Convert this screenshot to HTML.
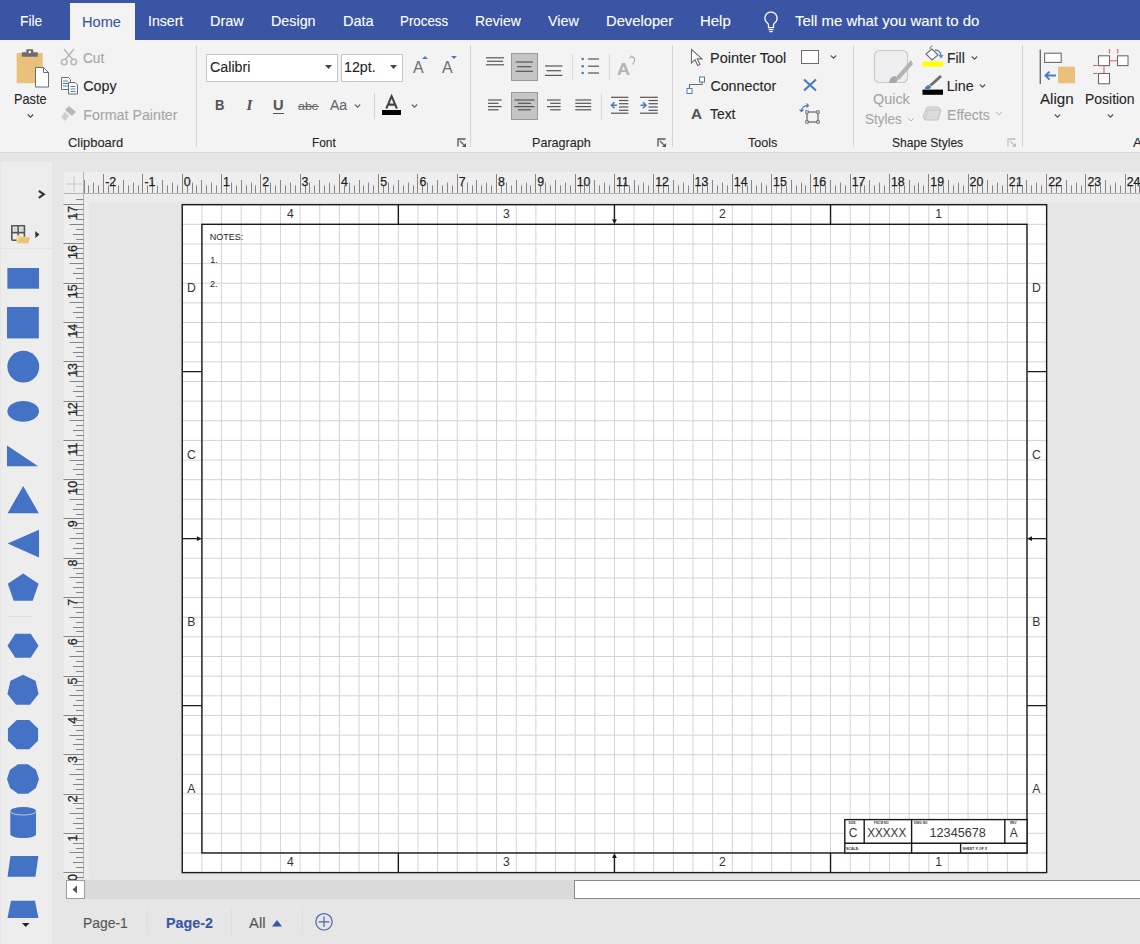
<!DOCTYPE html><html><head><meta charset="utf-8"><style>
*{margin:0;padding:0;box-sizing:border-box}
html,body{width:1140px;height:944px;overflow:hidden}
body{background:#e6e6e6;font-family:"Liberation Sans",sans-serif;position:relative;color:#262626}
.abs{position:absolute}
.tab{position:absolute;top:0;height:40px;line-height:42px;color:#fff;font-size:15px;white-space:nowrap}
.rib{position:absolute;left:0;top:40px;width:1140px;height:113px;background:#f3f3f3;border-bottom:1px solid #d6d6d6}
.t{position:absolute;white-space:nowrap;font-size:15px;color:#262626;line-height:1;-webkit-text-stroke:0.1px currentColor}
.g{color:#a6a6a6}
.sep{position:absolute;width:1px;background:#c8c8c8}
.glab{position:absolute;top:135px;font-size:14px;color:#262626;white-space:nowrap;line-height:1}
</style></head><body><div class="abs" style="left:0;top:0;width:1140px;height:40px;background:#3955a3"></div><div class="abs" style="left:70px;top:3px;width:65px;height:38px;background:#f3f3f3"></div><div class="t" style="left:20px;top:14.35px;font-size:14.94px;color:#ffffff;transform:scaleX(0.918);transform-origin:0 0;">File</div><div class="t" style="left:148.4px;top:14.35px;font-size:14.94px;color:#ffffff;transform:scaleX(0.944);transform-origin:0 0;">Insert</div><div class="t" style="left:210.4px;top:14.35px;font-size:14.94px;color:#ffffff;transform:scaleX(0.969);transform-origin:0 0;">Draw</div><div class="t" style="left:271.2px;top:14.35px;font-size:14.94px;color:#ffffff;transform:scaleX(0.959);transform-origin:0 0;">Design</div><div class="t" style="left:342.8px;top:14.35px;font-size:14.94px;color:#ffffff;transform:scaleX(0.973);transform-origin:0 0;">Data</div><div class="t" style="left:400.2px;top:14.35px;font-size:14.94px;color:#ffffff;transform:scaleX(0.893);transform-origin:0 0;">Process</div><div class="t" style="left:475.3px;top:14.35px;font-size:14.94px;color:#ffffff;transform:scaleX(0.933);transform-origin:0 0;">Review</div><div class="t" style="left:548.2px;top:14.35px;font-size:14.94px;color:#ffffff;transform:scaleX(0.959);transform-origin:0 0;">View</div><div class="t" style="left:606px;top:14.35px;font-size:14.94px;color:#ffffff;transform:scaleX(0.987);transform-origin:0 0;">Developer</div><div class="t" style="left:700px;top:14.35px;font-size:14.94px;color:#ffffff;">Help</div><div class="t" style="left:795px;top:14.35px;font-size:14.94px;color:#ffffff;">Tell me what you want to do</div><div class="t" style="left:82.1px;top:14.77px;font-size:14.8px;color:#3a56a0;transform:scaleX(0.985);transform-origin:0 0;">Home</div><svg class="abs" style="left:762px;top:11px;" width="18" height="22" viewBox="0 0 18 22"><path d="M9 1.2a6 6 0 0 0-3.6 10.8c.7.6 1.1 1.4 1.1 2.3v2.4h5v-2.4c0-.9.4-1.7 1.1-2.3A6 6 0 0 0 9 1.2z" fill="none" stroke="#fff" stroke-width="1.3"/><path d="M6.6 18.6h4.8M7.4 20.6h3.2" stroke="#fff" stroke-width="1.3"/></svg><div class="rib"></div><div class="sep" style="left:195.6px;top:45px;height:102px;background:#d4d4d4"></div><div class="sep" style="left:470px;top:45px;height:102px;background:#d4d4d4"></div><div class="sep" style="left:672px;top:45px;height:102px;background:#d4d4d4"></div><div class="sep" style="left:852.5px;top:45px;height:102px;background:#d4d4d4"></div><div class="sep" style="left:1021.8px;top:45px;height:102px;background:#d4d4d4"></div><div class="t" style="left:67.5px;top:136.5px;font-size:12.29px;color:#262626;transform:scaleX(1.051);transform-origin:0 0;">Clipboard</div><div class="t" style="left:311.7px;top:136.5px;font-size:12.29px;color:#262626;transform:scaleX(0.968);transform-origin:0 0;">Font</div><div class="t" style="left:531.7px;top:136.5px;font-size:12.29px;color:#262626;transform:scaleX(1.026);transform-origin:0 0;">Paragraph</div><div class="t" style="left:748px;top:136.5px;font-size:12.29px;color:#262626;transform:scaleX(1.025);transform-origin:0 0;">Tools</div><div class="t" style="left:892px;top:136.5px;font-size:12.29px;color:#262626;transform:scaleX(0.983);transform-origin:0 0;">Shape Styles</div><div class="t" style="left:1133px;top:136.5px;font-size:12.29px;color:#262626;transform:scaleX(1.098);transform-origin:0 0;">A</div><svg class="abs" style="left:456.6px;top:137.5px;" width="10" height="10" viewBox="0 0 10 10"><path d="M1 8.5V1h7.5" fill="none" stroke="#555" stroke-width="1.3"/><path d="M3 3l4.2 4.2" stroke="#555" stroke-width="1.2"/><path d="M9 9H5L9 5z" fill="#555"/></svg><svg class="abs" style="left:657.4px;top:137.5px;" width="10" height="10" viewBox="0 0 10 10"><path d="M1 8.5V1h7.5" fill="none" stroke="#555" stroke-width="1.3"/><path d="M3 3l4.2 4.2" stroke="#555" stroke-width="1.2"/><path d="M9 9H5L9 5z" fill="#555"/></svg><svg class="abs" style="left:1006.6px;top:137.5px;" width="10" height="10" viewBox="0 0 10 10"><path d="M1 8.5V1h7.5" fill="none" stroke="#c0c0c0" stroke-width="1.3"/><path d="M3 3l4.2 4.2" stroke="#c0c0c0" stroke-width="1.2"/><path d="M9 9H5L9 5z" fill="#c0c0c0"/></svg><svg class="abs" style="left:14px;top:47px;" width="38" height="42" viewBox="0 0 38 42"><rect x="2.7" y="6" width="26" height="30.2" fill="#eac17a"/><path d="M7.8 9.7V5.2h4.5V3.3c0-.6.5-1 1-1h5c.5 0 1 .4 1 1v1.9h4.5v4.5z" fill="#6d6d6d"/><circle cx="15.8" cy="5" r="1.3" fill="#f3f3f3"/><path d="M21.5 20.5h8l5 5v14.5h-13z" fill="#fff" stroke="#6d6d6d" stroke-width="1"/><path d="M29.5 20.5v5h5" fill="none" stroke="#6d6d6d" stroke-width="1"/></svg><div class="t" style="left:14px;top:92.14px;font-size:14.25px;color:#262626;transform:scaleX(0.892);transform-origin:0 0;">Paste</div><svg class="abs" style="left:26px;top:113px;" width="9" height="6" viewBox="0 0 9 6"><path d="M1.8 1.5l2.7 2.7L7.2 1.5" fill="none" stroke="#444" stroke-width="1.2"/></svg><svg class="abs" style="left:60px;top:48px;" width="18" height="18" viewBox="0 0 18 18"><path d="M4 1l9 11M14 1l-9 11" stroke="#b8b8b8" stroke-width="1.5" fill="none"/><circle cx="4.2" cy="14" r="2.8" fill="none" stroke="#b8b8b8" stroke-width="1.5"/><circle cx="13.8" cy="14" r="2.8" fill="none" stroke="#b8b8b8" stroke-width="1.5"/></svg><div class="t" style="left:83.3px;top:50.74px;font-size:14.25px;color:#a6a6a6;transform:scaleX(0.956);transform-origin:0 0;">Cut</div><svg class="abs" style="left:60px;top:76px;" width="19" height="19" viewBox="0 0 19 19"><path d="M1.5 1.5h7l2 2v10h-9z" fill="#fff" stroke="#6d6d6d"/><path d="M3 5h5M3 7.5h5M3 10h5" stroke="#4a7ebb" stroke-width="1"/><path d="M8.5 6.5h6.5l2.5 2.5v9h-9z" fill="#fff" stroke="#6d6d6d"/><path d="M10.5 10.5h5M10.5 13h5M10.5 15.5h5" stroke="#4a7ebb" stroke-width="1"/></svg><div class="t" style="left:83.3px;top:78.84px;font-size:14.25px;color:#262626;">Copy</div><svg class="abs" style="left:60px;top:105px;" width="18" height="17" viewBox="0 0 18 17"><path d="M9 1l7 6-4 4-7-6z" fill="#b8b8b8"/><path d="M5 7l4 4-4 5-4-4z" fill="#cfcfcf"/></svg><div class="t" style="left:83.3px;top:107.74px;font-size:14.25px;color:#a6a6a6;">Format Painter</div><div class="abs" style="left:206px;top:53.5px;width:131.5px;height:28px;background:#fff;border:1px solid #c6c6c6"></div><div class="abs" style="left:340.5px;top:53.5px;width:62px;height:28px;background:#fff;border:1px solid #c6c6c6"></div><div class="t" style="left:210px;top:60.44px;font-size:14.25px;color:#262626;">Calibri</div><div class="t" style="left:344px;top:60.44px;font-size:14.25px;color:#262626;">12pt.</div><svg class="abs" style="left:325px;top:65px;" width="8" height="5" viewBox="0 0 8 5"><path d="M0 0h7l-3.5 4z" fill="#444"/></svg><svg class="abs" style="left:389.5px;top:65px;" width="8" height="5" viewBox="0 0 8 5"><path d="M0 0h7l-3.5 4z" fill="#444"/></svg><svg class="abs" style="left:412px;top:55px;" width="17" height="20" viewBox="0 0 17 20"><text x="1" y="18" font-family="Liberation Sans" font-size="16" fill="#6d6d6d">A</text><path d="M10 4l3-3 3 3z" fill="#4a7ebb"/></svg><svg class="abs" style="left:441px;top:55px;" width="17" height="20" viewBox="0 0 17 20"><text x="1" y="18" font-family="Liberation Sans" font-size="16" fill="#6d6d6d">A</text><path d="M10 1l3 3 3-3z" fill="#4a7ebb"/></svg><div class="t" style="left:214.6px;top:98.39px;font-size:14.66px;color:#555;font-weight:bold;transform:scaleX(0.888);transform-origin:0 0;">B</div><div class="t" style="left:246.5px;top:98px;font-size:15px;color:#555;font-style:italic;font-family:'Liberation Serif',serif;font-weight:bold">I</div><div class="t" style="left:273px;top:98.39px;font-size:14.66px;color:#555;font-weight:bold;">U</div><div class="abs" style="left:272.5px;top:112.5px;width:11.5px;height:1.5px;background:#555"></div><div class="t" style="left:298px;top:101.93px;font-size:10.47px;color:#666;transform:scaleX(1.184);transform-origin:0 0;">abc</div><div class="abs" style="left:297.5px;top:106px;width:21px;height:1.2px;background:#666"></div><div class="t" style="left:329.6px;top:98.39px;font-size:14.66px;color:#666;transform:scaleX(0.959);transform-origin:0 0;">Aa</div><svg class="abs" style="left:353px;top:103px;" width="9" height="6" viewBox="0 0 9 6"><path d="M1.8 1.5l2.7 2.7L7.2 1.5" fill="none" stroke="#666" stroke-width="1.1"/></svg><div class="sep" style="left:374px;top:93px;height:26px;background:#d4d4d4"></div><svg class="abs" style="left:380px;top:94px;" width="22" height="16" viewBox="0 0 22 16"><path d="M6.3 14.7L11.6 2.2L16.9 14.7M8.2 10.6H15" fill="none" stroke="#444" stroke-width="2.1"/></svg><div class="abs" style="left:381.7px;top:110px;width:19.7px;height:5px;background:#000"></div><svg class="abs" style="left:410px;top:103px;" width="9" height="6" viewBox="0 0 9 6"><path d="M1.8 1.5l2.7 2.7L7.2 1.5" fill="none" stroke="#666" stroke-width="1.1"/></svg><div class="abs" style="left:511px;top:53.3px;width:27px;height:27.6px;background:#c5c5c5;border:1px solid #9a9a9a"></div><div class="abs" style="left:511px;top:91.6px;width:27px;height:28px;background:#c5c5c5;border:1px solid #9a9a9a"></div><svg class="abs" style="left:0px;top:0px;pointer-events:none" width="680" height="130" viewBox="0 0 680 130"><path d="M486 57.8H504" stroke="#555" stroke-width="1.2"/><path d="M487 61.3H503" stroke="#555" stroke-width="1.2"/><path d="M486 64.8H504" stroke="#555" stroke-width="1.2"/><path d="M515.7 62H533" stroke="#555" stroke-width="1.2"/><path d="M517 66.7H531.5" stroke="#555" stroke-width="1.2"/><path d="M515.7 71.3H533" stroke="#555" stroke-width="1.2"/><path d="M545 66H562.4" stroke="#555" stroke-width="1.2"/><path d="M546.5 70.7H561" stroke="#555" stroke-width="1.2"/><path d="M545 75.4H562.4" stroke="#555" stroke-width="1.2"/><path d="M488 100H501.7" stroke="#555" stroke-width="1.2"/><path d="M488 103.3H498.5" stroke="#555" stroke-width="1.2"/><path d="M488 106.6H501.7" stroke="#555" stroke-width="1.2"/><path d="M488 109.8H498.5" stroke="#555" stroke-width="1.2"/><path d="M514.5 100H534.5" stroke="#555" stroke-width="1.2"/><path d="M518 103.3H531" stroke="#555" stroke-width="1.2"/><path d="M514.5 106.6H534.5" stroke="#555" stroke-width="1.2"/><path d="M518 109.8H531" stroke="#555" stroke-width="1.2"/><path d="M547 100H560.6" stroke="#555" stroke-width="1.2"/><path d="M550.2 103.3H560.6" stroke="#555" stroke-width="1.2"/><path d="M547 106.6H560.6" stroke="#555" stroke-width="1.2"/><path d="M550.2 109.8H560.6" stroke="#555" stroke-width="1.2"/><path d="M575.3 100H591.2" stroke="#555" stroke-width="1.2"/><path d="M575.3 103.3H591.2" stroke="#555" stroke-width="1.2"/><path d="M575.3 106.6H591.2" stroke="#555" stroke-width="1.2"/><path d="M575.3 109.8H591.2" stroke="#555" stroke-width="1.2"/><path d="M587.9 59H599" stroke="#555" stroke-width="1.2"/><path d="M587.9 66.2H599" stroke="#555" stroke-width="1.2"/><path d="M587.9 73H599" stroke="#555" stroke-width="1.2"/><circle cx="582.7" cy="59" r="1.3" fill="#4a7ebb"/><circle cx="582.7" cy="66.2" r="1.3" fill="#4a7ebb"/><circle cx="582.7" cy="73" r="1.3" fill="#4a7ebb"/><path d="M611 97.3H628.4" stroke="#555" stroke-width="1.2"/><path d="M619 100.5H628.4" stroke="#555" stroke-width="1.2"/><path d="M619 103.7H628.4" stroke="#555" stroke-width="1.2"/><path d="M619 107H628.4" stroke="#555" stroke-width="1.2"/><path d="M619 110.3H628.4" stroke="#555" stroke-width="1.2"/><path d="M611 113.2H628.4" stroke="#555" stroke-width="1.2"/><path d="M617 105.3h-5.5M614.5 102.3l-3 3 3 3" stroke="#4a7ebb" stroke-width="1.6" fill="none"/><path d="M640 97.3H657.8" stroke="#555" stroke-width="1.2"/><path d="M648.5 100.5H657.8" stroke="#555" stroke-width="1.2"/><path d="M648.5 103.7H657.8" stroke="#555" stroke-width="1.2"/><path d="M648.5 107H657.8" stroke="#555" stroke-width="1.2"/><path d="M648.5 110.3H657.8" stroke="#555" stroke-width="1.2"/><path d="M640 113.2H657.8" stroke="#555" stroke-width="1.2"/><path d="M640.5 105.3h5.5M643 102.3l3 3-3 3" stroke="#4a7ebb" stroke-width="1.6" fill="none"/></svg><div class="sep" style="left:571.7px;top:54px;height:26px;background:#d9d9d9"></div><div class="sep" style="left:608.5px;top:54px;height:26px;background:#d9d9d9"></div><div class="sep" style="left:601.3px;top:92.5px;height:27px;background:#d9d9d9"></div><div class="t" style="left:616.5px;top:60.74px;font-size:17.32px;color:#b5b5b5;font-weight:bold;transform:scaleX(1.039);transform-origin:0 0;">A</div><svg class="abs" style="left:627px;top:55px;" width="10" height="12" viewBox="0 0 10 12"><path d="M2.5 3.5L4.5 1.2 6.5 3.3M4.6 1.5C8 2 9 6 5.5 9.5" fill="none" stroke="#b5b5b5" stroke-width="1.2"/></svg><svg class="abs" style="left:689px;top:48px;" width="15" height="19" viewBox="0 0 15 19"><path d="M2.5 1.5v13.5l3.5-3.3 2.7 5.8 2.3-1-2.7-5.6h4.7z" fill="#fff" stroke="#6d6d6d" stroke-width="1.1"/></svg><div class="t" style="left:710.4px;top:50.74px;font-size:14.25px;color:#262626;transform:scaleX(1.018);transform-origin:0 0;">Pointer Tool</div><svg class="abs" style="left:686px;top:76px;" width="20" height="19" viewBox="0 0 20 19"><rect x="13.5" y="1" width="5" height="5" fill="#fff" stroke="#4a7ebb"/><rect x="1" y="12.5" width="5" height="5" fill="#fff" stroke="#4a7ebb"/><path d="M3.5 12.5V8.5H16V6" fill="none" stroke="#6d6d6d" stroke-width="1.1"/></svg><div class="t" style="left:710.4px;top:78.84px;font-size:14.25px;color:#262626;">Connector</div><div class="t" style="left:691px;top:106.89px;font-size:14.66px;color:#555;font-weight:bold;transform:scaleX(1.039);transform-origin:0 0;">A</div><div class="t" style="left:710.4px;top:107.24px;font-size:14.25px;color:#262626;transform:scaleX(0.972);transform-origin:0 0;">Text</div><div class="abs" style="left:800.7px;top:50.2px;width:18.3px;height:13.5px;background:#fff;border:1px solid #6d6d6d"></div><svg class="abs" style="left:829px;top:54px;" width="9" height="6" viewBox="0 0 9 6"><path d="M1.8 1.5l2.7 2.7L7.2 1.5" fill="none" stroke="#555" stroke-width="1.1"/></svg><svg class="abs" style="left:802px;top:78px;" width="16" height="14" viewBox="0 0 16 14"><path d="M2 1.5l12 11M14 1.5l-12 11" stroke="#4a7ebb" stroke-width="2.2"/></svg><svg class="abs" style="left:799px;top:103px;" width="22" height="21" viewBox="0 0 22 21"><rect x="8" y="9" width="11" height="10" fill="none" stroke="#555" stroke-width="1.1"/><rect x="6.8" y="7.8" width="2.4" height="2.4" fill="#fff" stroke="#555" stroke-width=".8"/><rect x="17.8" y="7.8" width="2.4" height="2.4" fill="#fff" stroke="#555" stroke-width=".8"/><rect x="6.8" y="17.8" width="2.4" height="2.4" fill="#fff" stroke="#555" stroke-width=".8"/><rect x="17.8" y="17.8" width="2.4" height="2.4" fill="#fff" stroke="#555" stroke-width=".8"/><path d="M2.5 8.5c0-4 3-6 7-6" fill="none" stroke="#4a7ebb" stroke-width="1.3"/><path d="M7.5 0.5l2 2-2 2M0.5 6.5l2 2 2-2" fill="none" stroke="#4a7ebb" stroke-width="1.1"/></svg><svg class="abs" style="left:872px;top:48px;" width="42" height="36" viewBox="0 0 42 36"><rect x="2.5" y="2.5" width="33" height="32" rx="5" fill="#efeff2" stroke="#c9c9c9" stroke-width="1.2"/><path d="M39 12l-15 17 3 3 14-16z" fill="#b4b4b4"/><path d="M23 28c-3 0-6 3-6 7h4c3 0 5-2 5-4z" fill="#a8a8a8"/></svg><div class="t" style="left:873px;top:91.94px;font-size:14.25px;color:#a6a6a6;transform:scaleX(1.011);transform-origin:0 0;">Quick</div><div class="t" style="left:865.3px;top:111.94px;font-size:14.25px;color:#a6a6a6;transform:scaleX(0.946);transform-origin:0 0;">Styles</div><svg class="abs" style="left:907px;top:117px;" width="8" height="5" viewBox="0 0 8 5"><path d="M1 1l3 3 3-3" fill="none" stroke="#b5b5b5" stroke-width="1"/></svg><svg class="abs" style="left:921px;top:45px;" width="24" height="24" viewBox="0 0 24 24"><path d="M5 9l6-5 6 6-6 5z" fill="#fff" stroke="#6d6d6d" stroke-width="1.1"/><path d="M9 4c0-2 1-3 2.5-3" fill="none" stroke="#6d6d6d"/><path d="M14 5c3 0 6 2 6 6" fill="none" stroke="#4a7ebb" stroke-width="1.5"/><path d="M18 10l2 2.5 2-2.5" fill="none" stroke="#4a7ebb" stroke-width="1.2"/><rect x="1.5" y="16.5" width="20.5" height="5" fill="#ffff00"/></svg><div class="t" style="left:946.7px;top:50.84px;font-size:14.25px;color:#262626;transform:scaleX(0.978);transform-origin:0 0;">Fill</div><svg class="abs" style="left:970px;top:55px;" width="9" height="6" viewBox="0 0 9 6"><path d="M1.8 1.5l2.7 2.7L7.2 1.5" fill="none" stroke="#555" stroke-width="1.1"/></svg><svg class="abs" style="left:921px;top:74px;" width="24" height="22" viewBox="0 0 24 22"><path d="M19 1l2 2-10 9-3-1z" fill="#6d6d6d"/><path d="M8 11c-2 0-4 2-4.5 4h5l2-2z" fill="#4a7ebb"/><rect x="1.5" y="15.6" width="20.5" height="5.2" fill="#000"/></svg><div class="t" style="left:946.7px;top:78.84px;font-size:14.25px;color:#262626;">Line</div><svg class="abs" style="left:978px;top:83px;" width="9" height="6" viewBox="0 0 9 6"><path d="M1.8 1.5l2.7 2.7L7.2 1.5" fill="none" stroke="#555" stroke-width="1.1"/></svg><svg class="abs" style="left:922px;top:105px;" width="20" height="18" viewBox="0 0 20 18"><path d="M5 2h11l3 3-3 10H3L1 12z" fill="#dcdcdc" stroke="#c4c4c4" stroke-width="1"/><path d="M3 15l3-10h13" fill="none" stroke="#c4c4c4"/></svg><div class="t" style="left:947.2px;top:107.74px;font-size:14.25px;color:#a6a6a6;transform:scaleX(0.989);transform-origin:0 0;">Effects</div><svg class="abs" style="left:995px;top:111px;" width="8" height="5" viewBox="0 0 8 5"><path d="M1 1l3 3 3-3" fill="none" stroke="#b5b5b5" stroke-width="1"/></svg><svg class="abs" style="left:1037px;top:47px;" width="42" height="40" viewBox="0 0 42 40"><path d="M3.3 2.5v34.5" stroke="#6d6d6d" stroke-width="1.4"/><rect x="7.6" y="6.2" width="16.6" height="9.2" fill="#fff" stroke="#6d6d6d" stroke-width="1.1"/><rect x="21" y="19.7" width="17" height="16.6" fill="#eac17a"/><path d="M19 28.6H8.5M12.5 24.6l-4 4 4 4" fill="none" stroke="#4a7ebb" stroke-width="2"/></svg><div class="t" style="left:1040.3px;top:91.94px;font-size:14.25px;color:#262626;transform:scaleX(1.064);transform-origin:0 0;">Align</div><svg class="abs" style="left:1053px;top:113px;" width="9" height="6" viewBox="0 0 9 6"><path d="M1.8 1.5l2.7 2.7L7.2 1.5" fill="none" stroke="#555" stroke-width="1.1"/></svg><svg class="abs" style="left:1091px;top:47px;" width="40" height="40" viewBox="0 0 40 40"><rect x="7.5" y="8.8" width="11" height="9.8" fill="#fff" stroke="#6d6d6d" stroke-width="1.1"/><rect x="26.5" y="8.8" width="10.5" height="9.8" fill="#fff" stroke="#6d6d6d" stroke-width="1.1"/><rect x="7.5" y="26.5" width="11" height="10.3" fill="#fff" stroke="#6d6d6d" stroke-width="1.1"/><path d="M18.5 13.7h8M13 18.6v7.9" stroke="#d46a50" stroke-width="1.1"/><path d="M2 18.5h4.5M2 26.5h4.5M18.5 2v4.5M26.7 2v4.5" stroke="#e07050" stroke-width="1.2"/></svg><div class="t" style="left:1085.4px;top:91.94px;font-size:14.25px;color:#262626;transform:scaleX(0.979);transform-origin:0 0;">Position</div><svg class="abs" style="left:1106px;top:113px;" width="9" height="6" viewBox="0 0 9 6"><path d="M1.8 1.5l2.7 2.7L7.2 1.5" fill="none" stroke="#555" stroke-width="1.1"/></svg><div class="abs" style="left:0;top:153px;width:1140px;height:791px;background:#e6e6e6"></div><div class="abs" style="left:1px;top:162px;width:51px;height:782px;background:#ededed"></div><div class="abs" style="left:1px;top:248px;width:51px;height:1px;background:#e2e2e2"></div><div class="abs" style="left:8px;top:616px;width:24px;height:1px;background:#dedede"></div><svg class="abs" style="left:36px;top:187px;" width="10" height="14" viewBox="0 0 10 14"><path d="M2.8 3.8L7.8 7.3 2.8 10.8" fill="none" stroke="#333" stroke-width="2.1"/></svg><svg class="abs" style="left:9px;top:223px;" width="32" height="24" viewBox="0 0 32 24"><path d="M2.8 17.3V2.8h12.6v14.5H2.8M9.1 2.8v14.5M2.8 9.6h12.6" fill="none" stroke="#555" stroke-width="1.6"/><rect x="4.6" y="4.6" width="2.8" height="3.2" fill="#d0d0d0"/><rect x="10.9" y="4.6" width="2.8" height="3.2" fill="#d0d0d0"/><path d="M7.5 12.2h4.5l1.5 1.5h6.5v6.5H7.5z" fill="#f3d9a0"/><path d="M8.5 20.2l2-5.8h10.7l-2 5.8z" fill="#eac17a"/><path d="M26.3 8l4.2 3.5-4.2 3.5z" fill="#333"/></svg><svg class="abs" style="left:0;top:0" width="52" height="944" viewBox="0 0 52 944"><g fill="#4472c4"><rect x="7.4" y="268" width="31.6" height="20.7"/><rect x="7" y="307" width="31.8" height="31.4"/><circle cx="23.3" cy="366.7" r="15.9"/><ellipse cx="23.2" cy="411.3" rx="15.8" ry="10.4"/><path d="M7 445.5V466.2H38.1z"/><path d="M23.2 485.9L38.8 513.2H7.6z"/><path d="M7.6 543.5L39 529.7V557.4z"/><polygon points="23.2,573.43 38.61,583.84 32.72,600.69 13.68,600.69 7.79,583.84"/><polygon points="38.5,645.8 30.75,657.75 15.25,657.75 7.5,645.8 15.25,633.85 30.75,633.85"/><polygon points="23,674.82 35.51,680.72 38.6,693.99 29.94,704.63 16.06,704.63 7.4,693.99 10.49,680.72"/><polygon points="38.06,740.65 29.24,749.21 16.76,749.21 7.94,740.65 7.94,728.55 16.76,719.99 29.24,719.99 38.06,728.55"/><polygon points="39,778.9 35.94,788.02 27.94,793.66 18.06,793.66 10.06,788.02 7,778.9 10.06,769.78 18.06,764.14 27.94,764.14 35.94,769.78"/><path d="M10.3 811v23c0 2.5 5.7 4 12.85 4s12.85-1.5 12.85-4v-23z"/><ellipse cx="23.15" cy="811" rx="12.85" ry="4"/><path d="M10.3 811c0 2.5 5.7 4 12.85 4s12.85-1.5 12.85-4" fill="none" stroke="#ddd" stroke-width=".8"/><path d="M10.5 856H38.4L35.4 876.7H7.5z"/><path d="M11 900.7H35L38.4 917.9H7.5z"/></g><path d="M22 923h7.5l-3.75 4z" fill="#222"/></svg><svg class="abs" style="left:0;top:0" width="1140" height="944" viewBox="0 0 1140 944"><rect x="64" y="172" width="1076" height="22" fill="#eeeeee"/><rect x="84" y="194" width="1056" height="8" fill="#ececec"/><rect x="84" y="194" width="5" height="684" fill="#ececec"/><rect x="64" y="172" width="20" height="706" fill="#eeeeee"/><path d="M64 193.5H1140" stroke="#b4b4b4" stroke-width="1"/><path d="M83.5 172V878" stroke="#b4b4b4" stroke-width="1"/><path d="M74 176V192M66 184H82" stroke="#c8c8c8" stroke-width="1"/><path d="M84.5 180V193 M88.5 185.5V193 M93.5 182.5V193 M98.5 185.5V193 M103.5 174V193 M108.5 185.5V193 M113.5 182.5V193 M118.5 185.5V193 M123.5 180V193 M128.5 185.5V193 M133.5 182.5V193 M138.5 185.5V193 M142.5 174V193 M147.5 185.5V193 M152.5 182.5V193 M157.5 185.5V193 M162.5 180V193 M167.5 185.5V193 M172.5 182.5V193 M177.5 185.5V193 M182.5 174V193 M187.5 185.5V193 M192.5 182.5V193 M196.5 185.5V193 M201.5 180V193 M206.5 185.5V193 M211.5 182.5V193 M216.5 185.5V193 M221.5 174V193 M226.5 185.5V193 M231.5 182.5V193 M236.5 185.5V193 M241.5 180V193 M246.5 185.5V193 M251.5 182.5V193 M255.5 185.5V193 M260.5 174V193 M265.5 185.5V193 M270.5 182.5V193 M275.5 185.5V193 M280.5 180V193 M285.5 185.5V193 M290.5 182.5V193 M295.5 185.5V193 M300.5 174V193 M305.5 185.5V193 M309.5 182.5V193 M314.5 185.5V193 M319.5 180V193 M324.5 185.5V193 M329.5 182.5V193 M334.5 185.5V193 M339.5 174V193 M344.5 185.5V193 M349.5 182.5V193 M354.5 185.5V193 M359.5 180V193 M363.5 185.5V193 M368.5 182.5V193 M373.5 185.5V193 M378.5 174V193 M383.5 185.5V193 M388.5 182.5V193 M393.5 185.5V193 M398.5 180V193 M403.5 185.5V193 M408.5 182.5V193 M413.5 185.5V193 M417.5 174V193 M422.5 185.5V193 M427.5 182.5V193 M432.5 185.5V193 M437.5 180V193 M442.5 185.5V193 M447.5 182.5V193 M452.5 185.5V193 M457.5 174V193 M462.5 185.5V193 M467.5 182.5V193 M472.5 185.5V193 M476.5 180V193 M481.5 185.5V193 M486.5 182.5V193 M491.5 185.5V193 M496.5 174V193 M501.5 185.5V193 M506.5 182.5V193 M511.5 185.5V193 M516.5 180V193 M521.5 185.5V193 M526.5 182.5V193 M530.5 185.5V193 M535.5 174V193 M540.5 185.5V193 M545.5 182.5V193 M550.5 185.5V193 M555.5 180V193 M560.5 185.5V193 M565.5 182.5V193 M570.5 185.5V193 M575.5 174V193 M580.5 185.5V193 M584.5 182.5V193 M589.5 185.5V193 M594.5 180V193 M599.5 185.5V193 M604.5 182.5V193 M609.5 185.5V193 M614.5 174V193 M619.5 185.5V193 M624.5 182.5V193 M629.5 185.5V193 M634.5 180V193 M638.5 185.5V193 M643.5 182.5V193 M648.5 185.5V193 M653.5 174V193 M658.5 185.5V193 M663.5 182.5V193 M668.5 185.5V193 M673.5 180V193 M678.5 185.5V193 M683.5 182.5V193 M688.5 185.5V193 M693.5 174V193 M697.5 185.5V193 M702.5 182.5V193 M707.5 185.5V193 M712.5 180V193 M717.5 185.5V193 M722.5 182.5V193 M727.5 185.5V193 M732.5 174V193 M737.5 185.5V193 M742.5 182.5V193 M747.5 185.5V193 M751.5 180V193 M756.5 185.5V193 M761.5 182.5V193 M766.5 185.5V193 M771.5 174V193 M776.5 185.5V193 M781.5 182.5V193 M786.5 185.5V193 M791.5 180V193 M796.5 185.5V193 M801.5 182.5V193 M805.5 185.5V193 M810.5 174V193 M815.5 185.5V193 M820.5 182.5V193 M825.5 185.5V193 M830.5 180V193 M835.5 185.5V193 M840.5 182.5V193 M845.5 185.5V193 M850.5 174V193 M855.5 185.5V193 M860.5 182.5V193 M864.5 185.5V193 M869.5 180V193 M874.5 185.5V193 M879.5 182.5V193 M884.5 185.5V193 M889.5 174V193 M894.5 185.5V193 M899.5 182.5V193 M904.5 185.5V193 M909.5 180V193 M914.5 185.5V193 M918.5 182.5V193 M923.5 185.5V193 M928.5 174V193 M933.5 185.5V193 M938.5 182.5V193 M943.5 185.5V193 M948.5 180V193 M953.5 185.5V193 M958.5 182.5V193 M963.5 185.5V193 M968.5 174V193 M972.5 185.5V193 M977.5 182.5V193 M982.5 185.5V193 M987.5 180V193 M992.5 185.5V193 M997.5 182.5V193 M1002.5 185.5V193 M1007.5 174V193 M1012.5 185.5V193 M1017.5 182.5V193 M1022.5 185.5V193 M1026.5 180V193 M1031.5 185.5V193 M1036.5 182.5V193 M1041.5 185.5V193 M1046.5 174V193 M1051.5 185.5V193 M1056.5 182.5V193 M1061.5 185.5V193 M1066.5 180V193 M1071.5 185.5V193 M1076.5 182.5V193 M1081.5 185.5V193 M1085.5 174V193 M1090.5 185.5V193 M1095.5 182.5V193 M1100.5 185.5V193 M1105.5 180V193 M1110.5 185.5V193 M1115.5 182.5V193 M1120.5 185.5V193 M1125.5 174V193 M1130.5 185.5V193 M1135.5 182.5V193 M1139.5 185.5V193" stroke="#858585" stroke-width="1"/><g font-family="Liberation Sans" font-size="12.4" fill="#1e1e1e" stroke="#1e1e1e" stroke-width="0.25"><text x="105.17" y="185.5">-2</text><text x="144.46" y="185.5">-1</text><text x="183.75" y="185.5">0</text><text x="223.04" y="185.5">1</text><text x="262.33" y="185.5">2</text><text x="301.62" y="185.5">3</text><text x="340.91" y="185.5">4</text><text x="380.2" y="185.5">5</text><text x="419.49" y="185.5">6</text><text x="458.78" y="185.5">7</text><text x="498.07" y="185.5">8</text><text x="537.36" y="185.5">9</text><text x="576.65" y="185.5">10</text><text x="615.94" y="185.5">11</text><text x="655.23" y="185.5">12</text><text x="694.52" y="185.5">13</text><text x="733.81" y="185.5">14</text><text x="773.1" y="185.5">15</text><text x="812.39" y="185.5">16</text><text x="851.68" y="185.5">17</text><text x="890.97" y="185.5">18</text><text x="930.26" y="185.5">19</text><text x="969.55" y="185.5">20</text><text x="1008.84" y="185.5">21</text><text x="1048.13" y="185.5">22</text><text x="1087.42" y="185.5">23</text><text x="1126.71" y="185.5">24</text></g><path d="M76.1 877.5H83.5 M63.5 872.5H83.5 M76.1 867.5H83.5 M72.9 862.5H83.5 M76.1 857.5H83.5 M69.5 852.5H83.5 M76.1 848.5H83.5 M72.9 843.5H83.5 M76.1 838.5H83.5 M63.5 833.5H83.5 M76.1 828.5H83.5 M72.9 823.5H83.5 M76.1 818.5H83.5 M69.5 813.5H83.5 M76.1 808.5H83.5 M72.9 803.5H83.5 M76.1 798.5H83.5 M63.5 794.5H83.5 M76.1 789.5H83.5 M72.9 784.5H83.5 M76.1 779.5H83.5 M69.5 774.5H83.5 M76.1 769.5H83.5 M72.9 764.5H83.5 M76.1 759.5H83.5 M63.5 754.5H83.5 M76.1 749.5H83.5 M72.9 744.5H83.5 M76.1 739.5H83.5 M69.5 735.5H83.5 M76.1 730.5H83.5 M72.9 725.5H83.5 M76.1 720.5H83.5 M63.5 715.5H83.5 M76.1 710.5H83.5 M72.9 705.5H83.5 M76.1 700.5H83.5 M69.5 695.5H83.5 M76.1 690.5H83.5 M72.9 685.5H83.5 M76.1 681.5H83.5 M63.5 676.5H83.5 M76.1 671.5H83.5 M72.9 666.5H83.5 M76.1 661.5H83.5 M69.5 656.5H83.5 M76.1 651.5H83.5 M72.9 646.5H83.5 M76.1 641.5H83.5 M63.5 636.5H83.5 M76.1 631.5H83.5 M72.9 627.5H83.5 M76.1 622.5H83.5 M69.5 617.5H83.5 M76.1 612.5H83.5 M72.9 607.5H83.5 M76.1 602.5H83.5 M63.5 597.5H83.5 M76.1 592.5H83.5 M72.9 587.5H83.5 M76.1 582.5H83.5 M69.5 577.5H83.5 M76.1 573.5H83.5 M72.9 568.5H83.5 M76.1 563.5H83.5 M63.5 558.5H83.5 M76.1 553.5H83.5 M72.9 548.5H83.5 M76.1 543.5H83.5 M69.5 538.5H83.5 M76.1 533.5H83.5 M72.9 528.5H83.5 M76.1 523.5H83.5 M63.5 518.5H83.5 M76.1 514.5H83.5 M72.9 509.5H83.5 M76.1 504.5H83.5 M69.5 499.5H83.5 M76.1 494.5H83.5 M72.9 489.5H83.5 M76.1 484.5H83.5 M63.5 479.5H83.5 M76.1 474.5H83.5 M72.9 469.5H83.5 M76.1 464.5H83.5 M69.5 460.5H83.5 M76.1 455.5H83.5 M72.9 450.5H83.5 M76.1 445.5H83.5 M63.5 440.5H83.5 M76.1 435.5H83.5 M72.9 430.5H83.5 M76.1 425.5H83.5 M69.5 420.5H83.5 M76.1 415.5H83.5 M72.9 410.5H83.5 M76.1 406.5H83.5 M63.5 401.5H83.5 M76.1 396.5H83.5 M72.9 391.5H83.5 M76.1 386.5H83.5 M69.5 381.5H83.5 M76.1 376.5H83.5 M72.9 371.5H83.5 M76.1 366.5H83.5 M63.5 361.5H83.5 M76.1 356.5H83.5 M72.9 352.5H83.5 M76.1 347.5H83.5 M69.5 342.5H83.5 M76.1 337.5H83.5 M72.9 332.5H83.5 M76.1 327.5H83.5 M63.5 322.5H83.5 M76.1 317.5H83.5 M72.9 312.5H83.5 M76.1 307.5H83.5 M69.5 302.5H83.5 M76.1 297.5H83.5 M72.9 293.5H83.5 M76.1 288.5H83.5 M63.5 283.5H83.5 M76.1 278.5H83.5 M72.9 273.5H83.5 M76.1 268.5H83.5 M69.5 263.5H83.5 M76.1 258.5H83.5 M72.9 253.5H83.5 M76.1 248.5H83.5 M63.5 243.5H83.5 M76.1 239.5H83.5 M72.9 234.5H83.5 M76.1 229.5H83.5 M69.5 224.5H83.5 M76.1 219.5H83.5 M72.9 214.5H83.5 M76.1 209.5H83.5 M63.5 204.5H83.5 M76.1 199.5H83.5" stroke="#858585" stroke-width="1"/><g font-family="Liberation Sans" font-size="12.4" fill="#1e1e1e" stroke="#1e1e1e" stroke-width="0.25"><text transform="translate(77,880.9) rotate(-90)" x="0" y="0">0</text><text transform="translate(77,841.61) rotate(-90)" x="0" y="0">1</text><text transform="translate(77,802.32) rotate(-90)" x="0" y="0">2</text><text transform="translate(77,763.03) rotate(-90)" x="0" y="0">3</text><text transform="translate(77,723.74) rotate(-90)" x="0" y="0">4</text><text transform="translate(77,684.45) rotate(-90)" x="0" y="0">5</text><text transform="translate(77,645.16) rotate(-90)" x="0" y="0">6</text><text transform="translate(77,605.87) rotate(-90)" x="0" y="0">7</text><text transform="translate(77,566.58) rotate(-90)" x="0" y="0">8</text><text transform="translate(77,527.29) rotate(-90)" x="0" y="0">9</text><text transform="translate(77,494.7) rotate(-90)" x="0" y="0">10</text><text transform="translate(77,455.41) rotate(-90)" x="0" y="0">11</text><text transform="translate(77,416.12) rotate(-90)" x="0" y="0">12</text><text transform="translate(77,376.83) rotate(-90)" x="0" y="0">13</text><text transform="translate(77,337.54) rotate(-90)" x="0" y="0">14</text><text transform="translate(77,298.25) rotate(-90)" x="0" y="0">15</text><text transform="translate(77,258.96) rotate(-90)" x="0" y="0">16</text><text transform="translate(77,219.67) rotate(-90)" x="0" y="0">17</text></g><rect x="182.25" y="204.67" width="864.38" height="667.93" fill="#fff"/><path d="M182.25 204.67V872.6 M201.9 204.67V872.6 M221.54 204.67V872.6 M241.19 204.67V872.6 M260.83 204.67V872.6 M280.48 204.67V872.6 M300.12 204.67V872.6 M319.76 204.67V872.6 M339.41 204.67V872.6 M359.06 204.67V872.6 M378.7 204.67V872.6 M398.35 204.67V872.6 M417.99 204.67V872.6 M437.63 204.67V872.6 M457.28 204.67V872.6 M476.93 204.67V872.6 M496.57 204.67V872.6 M516.21 204.67V872.6 M535.86 204.67V872.6 M555.5 204.67V872.6 M575.15 204.67V872.6 M594.8 204.67V872.6 M614.44 204.67V872.6 M634.09 204.67V872.6 M653.73 204.67V872.6 M673.38 204.67V872.6 M693.02 204.67V872.6 M712.66 204.67V872.6 M732.31 204.67V872.6 M751.96 204.67V872.6 M771.6 204.67V872.6 M791.25 204.67V872.6 M810.89 204.67V872.6 M830.53 204.67V872.6 M850.18 204.67V872.6 M869.82 204.67V872.6 M889.47 204.67V872.6 M909.12 204.67V872.6 M928.76 204.67V872.6 M948.4 204.67V872.6 M968.05 204.67V872.6 M987.69 204.67V872.6 M1007.34 204.67V872.6 M1026.99 204.67V872.6 M1046.63 204.67V872.6 M182.25 872.6H1046.63 M182.25 852.96H1046.63 M182.25 833.31H1046.63 M182.25 813.66H1046.63 M182.25 794.02H1046.63 M182.25 774.38H1046.63 M182.25 754.73H1046.63 M182.25 735.09H1046.63 M182.25 715.44H1046.63 M182.25 695.8H1046.63 M182.25 676.15H1046.63 M182.25 656.5H1046.63 M182.25 636.86H1046.63 M182.25 617.22H1046.63 M182.25 597.57H1046.63 M182.25 577.92H1046.63 M182.25 558.28H1046.63 M182.25 538.63H1046.63 M182.25 518.99H1046.63 M182.25 499.35H1046.63 M182.25 479.7H1046.63 M182.25 460.06H1046.63 M182.25 440.41H1046.63 M182.25 420.77H1046.63 M182.25 401.12H1046.63 M182.25 381.48H1046.63 M182.25 361.83H1046.63 M182.25 342.19H1046.63 M182.25 322.54H1046.63 M182.25 302.89H1046.63 M182.25 283.25H1046.63 M182.25 263.61H1046.63 M182.25 243.96H1046.63 M182.25 224.32H1046.63 M182.25 204.67H1046.63" stroke="#d3d3d3" stroke-width="1"/><rect x="182.25" y="204.67" width="864.38" height="667.93" fill="none" stroke="#1a1a1a" stroke-width="1.4"/><rect x="201.9" y="224.32" width="825.09" height="628.64" fill="none" stroke="#1a1a1a" stroke-width="1.4"/><path d="M398.35 204.67V224.32 M398.35 852.96V872.6 M182.25 371.65H201.9 M1026.99 371.65H1046.63 M830.53 204.67V224.32 M830.53 852.96V872.6 M182.25 705.62H201.9 M1026.99 705.62H1046.63 M614.44 204.67V219.32 M614.44 857.96V872.6 M182.25 538.63H196.9 M1031.99 538.63H1046.63" stroke="#1a1a1a" stroke-width="1.4"/><g fill="#1a1a1a"><path d="M614.44 224.32l-2.4 -5h4.8z"/><path d="M614.44 852.96l-2.4 5h4.8z"/><path d="M201.9 538.63l-5 -2.4v4.8z"/><path d="M1026.99 538.63l5 -2.4v4.8z"/></g><g font-family="Liberation Sans" font-size="12.2" fill="#333"><text x="290.3" y="218.2" text-anchor="middle">4</text><text x="290.3" y="866.4" text-anchor="middle">4</text><text x="506.39" y="218.2" text-anchor="middle">3</text><text x="506.39" y="866.4" text-anchor="middle">3</text><text x="722.49" y="218.2" text-anchor="middle">2</text><text x="722.49" y="866.4" text-anchor="middle">2</text><text x="938.58" y="218.2" text-anchor="middle">1</text><text x="938.58" y="866.4" text-anchor="middle">1</text><text x="191.4" y="291.76" text-anchor="middle">D</text><text x="1036.4" y="291.76" text-anchor="middle">D</text><text x="191.4" y="458.74" text-anchor="middle">C</text><text x="1036.4" y="458.74" text-anchor="middle">C</text><text x="191.4" y="625.73" text-anchor="middle">B</text><text x="1036.4" y="625.73" text-anchor="middle">B</text><text x="191.4" y="792.71" text-anchor="middle">A</text><text x="1036.4" y="792.71" text-anchor="middle">A</text></g><g font-family="Liberation Sans" font-size="9" fill="#222"><text x="209.7" y="239.7">NOTES:</text><text x="210.2" y="263.3">1.</text><text x="210" y="286.9">2.</text></g><rect x="844.8" y="819.6" width="182.19" height="33.36" fill="#fff" stroke="#1a1a1a" stroke-width="1.4"/><path d="M844.8 843.2H1026.99 M864.2 819.6V843.2 M911.6 819.6V852.96 M1004.8 819.6V843.2 M960.6 843.2V852.96" stroke="#1a1a1a" stroke-width="1.4"/><g font-family="Liberation Sans" fill="#383838" font-size="12"><text x="848.8" y="837">C</text><text x="867.2" y="837" textLength="39" lengthAdjust="spacingAndGlyphs">XXXXX</text><text x="929.5" y="837" textLength="56.4" lengthAdjust="spacingAndGlyphs">12345678</text><text x="1009.8" y="837">A</text></g><g font-family="Liberation Sans" fill="#333" font-size="3.2" font-weight="bold"><text x="848.5" y="823.6">SIZE</text><text x="874" y="823.6">FSCM NO</text><text x="914" y="823.6">DWG NO</text><text x="1010" y="823.6">REV</text><text x="846" y="849.6" font-size="3.6">SCALE:</text><text x="962.5" y="849.6" font-size="3.6">SHEET X OF X</text></g></svg><div class="abs" style="left:66px;top:880px;width:1074px;height:18.5px;background:#dadada"></div><div class="abs" style="left:66px;top:880px;width:18.5px;height:18.7px;background:#fff;border:1px solid #9d9d9d"></div><svg class="abs" style="left:70px;top:884px;" width="10" height="11" viewBox="0 0 10 11"><path d="M7 1.5v8l-4.5-4z" fill="#555"/></svg><div class="abs" style="left:574px;top:880px;width:570px;height:18.5px;background:#fff;border:1px solid #8a8a8a"></div><div class="t" style="left:82.8px;top:915.89px;font-size:14.66px;color:#555;transform:scaleX(0.949);transform-origin:0 0;">Page-1</div><div class="t" style="left:165.5px;top:915.89px;font-size:14.66px;color:#3955a3;font-weight:bold;transform:scaleX(0.977);transform-origin:0 0;">Page-2</div><div class="t" style="left:248.5px;top:915.89px;font-size:14.66px;color:#555;transform:scaleX(1.012);transform-origin:0 0;">All</div><svg class="abs" style="left:271px;top:919px;" width="12" height="8" viewBox="0 0 12 8"><path d="M1 7.5h10l-5-6.5z" fill="#3955a3"/></svg><svg class="abs" style="left:313.5px;top:912px;" width="20" height="20" viewBox="0 0 20 20"><circle cx="10" cy="9.8" r="8.2" fill="none" stroke="#4a64ae" stroke-width="1.2"/><path d="M10 4.5v10.6M4.7 9.8h10.6" stroke="#4a64ae" stroke-width="1.2"/></svg><div class="abs" style="left:147px;top:908px;width:1px;height:26px;background:#dedede"></div><div class="abs" style="left:231px;top:908px;width:1px;height:26px;background:#dedede"></div><div class="abs" style="left:302px;top:908px;width:1px;height:26px;background:#dedede"></div></body></html>
